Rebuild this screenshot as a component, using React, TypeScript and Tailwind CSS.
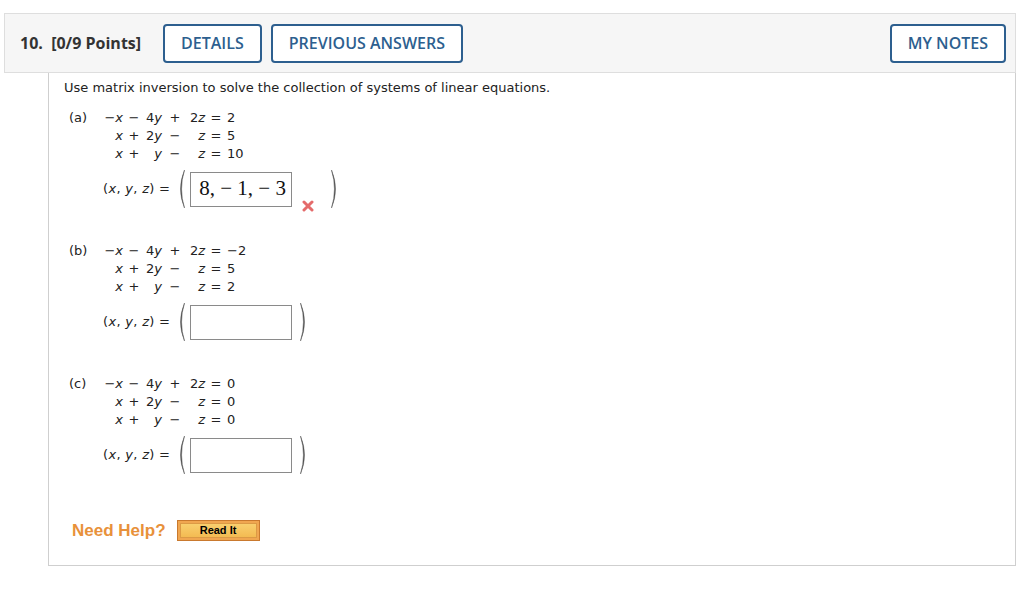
import React from 'react';

type Row = [string, string, React.ReactNode, string, React.ReactNode, string];

const V = ({ children }: { children: React.ReactNode }) => <i>{children}</i>;

function Paren({ right = false }: { right?: boolean }) {
  return (
    <svg width="10" height="40" viewBox="0 0 10 40" className={right ? 'scale-x-[-1]' : ''}>
      <path d="M8.5 1 Q0.5 20 8.5 39 Q2.6 20 8.5 1 Z" fill="#555" stroke="#555" strokeWidth="0.5" />
    </svg>
  );
}

function Cross() {
  return (
    <svg width="12" height="12" viewBox="0 0 12 12">
      <path d="M2 2 L10 10 M10 2 L2 10" stroke="#e46b6b" strokeWidth="3" strokeLinecap="round" />
    </svg>
  );
}

function Equations({ rhs }: { rhs: [string, string, string] }) {
  const rows: Row[] = [
    ['−', '−', <>4<V>y</V></>, '+', <>2<V>z</V></>, rhs[0]],
    ['', '+', <>2<V>y</V></>, '−', <V>z</V>, rhs[1]],
    ['', '+', <V>y</V>, '−', <V>z</V>, rhs[2]],
  ];
  return (
    <div className="grid grid-cols-[20px_22px_17px_26px_17px_22px_auto] leading-[18px]">
      {rows.map((r, i) => (
        <React.Fragment key={i}>
          <div className="text-right whitespace-nowrap">
            {r[0]}
            <V>x</V>
          </div>
          <div className="text-center">{r[1]}</div>
          <div className="text-right whitespace-nowrap">{r[2]}</div>
          <div className="text-center">{r[3]}</div>
          <div className="text-right whitespace-nowrap">{r[4]}</div>
          <div className="text-center">=</div>
          <div>{r[5]}</div>
        </React.Fragment>
      ))}
    </div>
  );
}

function Part({ label, rhs, answer }: { label: string; rhs: [string, string, string]; answer?: string }) {
  return (
    <div>
      <div className="flex">
        <div className="w-[39px] pl-[5px] leading-[18px]">{label}</div>
        <Equations rhs={rhs} />
      </div>
      <div className="flex items-center h-[40px] mt-[6px] ml-[39px]">
        <span className="tracking-[0.3px]">
          (<V>x</V>, <V>y</V>, <V>z</V>) =
        </span>
        <div className="ml-[6px]">
          <Paren />
        </div>
        <div className="ml-[4px] w-[102px] h-[35px] border border-[#8a8a8a] flex items-center pl-[8px] text-[21px] text-[#111] font-['Liberation_Serif',serif] whitespace-nowrap">
          {answer}
        </div>
        {answer ? (
          <div className="self-end mb-[-3px] ml-[10px] mr-[16px]">
            <Cross />
          </div>
        ) : (
          <div className="w-[7px]" />
        )}
        <Paren right />
      </div>
    </div>
  );
}

function HeaderButton({ children }: { children: React.ReactNode }) {
  return (
    <button className="h-[39px] px-[16px] border-2 border-[#2d5f8f] rounded-[4px] bg-white text-[#2d5f8f] text-[16px] font-semibold">
      {children}
    </button>
  );
}

export default function App() {
  return (
    <div className="w-[1024px] h-[597px] bg-white pt-[13px] pl-[4px] pr-[8px] font-['Open_Sans',sans-serif]">
      <div className="h-[60px] border border-[#dedede] bg-[#f6f6f6] flex items-center pl-[15px] pr-[9px]">
        <div className="text-[16px] font-bold text-[#333] whitespace-nowrap">10.&nbsp; [0/9 Points]</div>
        <div className="ml-[22px] flex gap-[9px]">
          <HeaderButton>DETAILS</HeaderButton>
          <HeaderButton>PREVIOUS ANSWERS</HeaderButton>
        </div>
        <div className="ml-auto">
          <HeaderButton>MY NOTES</HeaderButton>
        </div>
      </div>
      <div className="ml-[44px] border border-t-0 border-[#cfcfcf] pl-[15px] pt-[6px] pb-[24px] text-[13px] text-[#222] font-['DejaVu_Sans','Verdana',sans-serif]">
        <div className="leading-[18px]">Use matrix inversion to solve the collection of systems of linear equations.</div>
        <div className="mt-[12px] flex flex-col gap-[33px]">
          <Part label="(a)" rhs={['2', '5', '10']} answer="8, − 1, − 3" />
          <Part label="(b)" rhs={['−2', '5', '2']} />
          <Part label="(c)" rhs={['0', '0', '0']} />
        </div>
        <div className="mt-[45px] ml-[8px] h-[21px] flex items-center gap-[11px]">
          <span className="leading-none text-[17px] font-bold text-[#e8913a] font-['Liberation_Sans',Arial,sans-serif]">Need Help?</span>
          <button className="w-[83px] h-[21px] border border-[#c9792e] bg-[#f0a650] p-[2px]">
            <div className="h-full bg-gradient-to-b from-[#f9cf6e] to-[#f3bb52] border border-[#dc9a45] flex items-center justify-center text-[11px] leading-none font-bold text-black font-['Liberation_Sans',Arial,sans-serif]">
              Read It
            </div>
          </button>
        </div>
      </div>
    </div>
  );
}
